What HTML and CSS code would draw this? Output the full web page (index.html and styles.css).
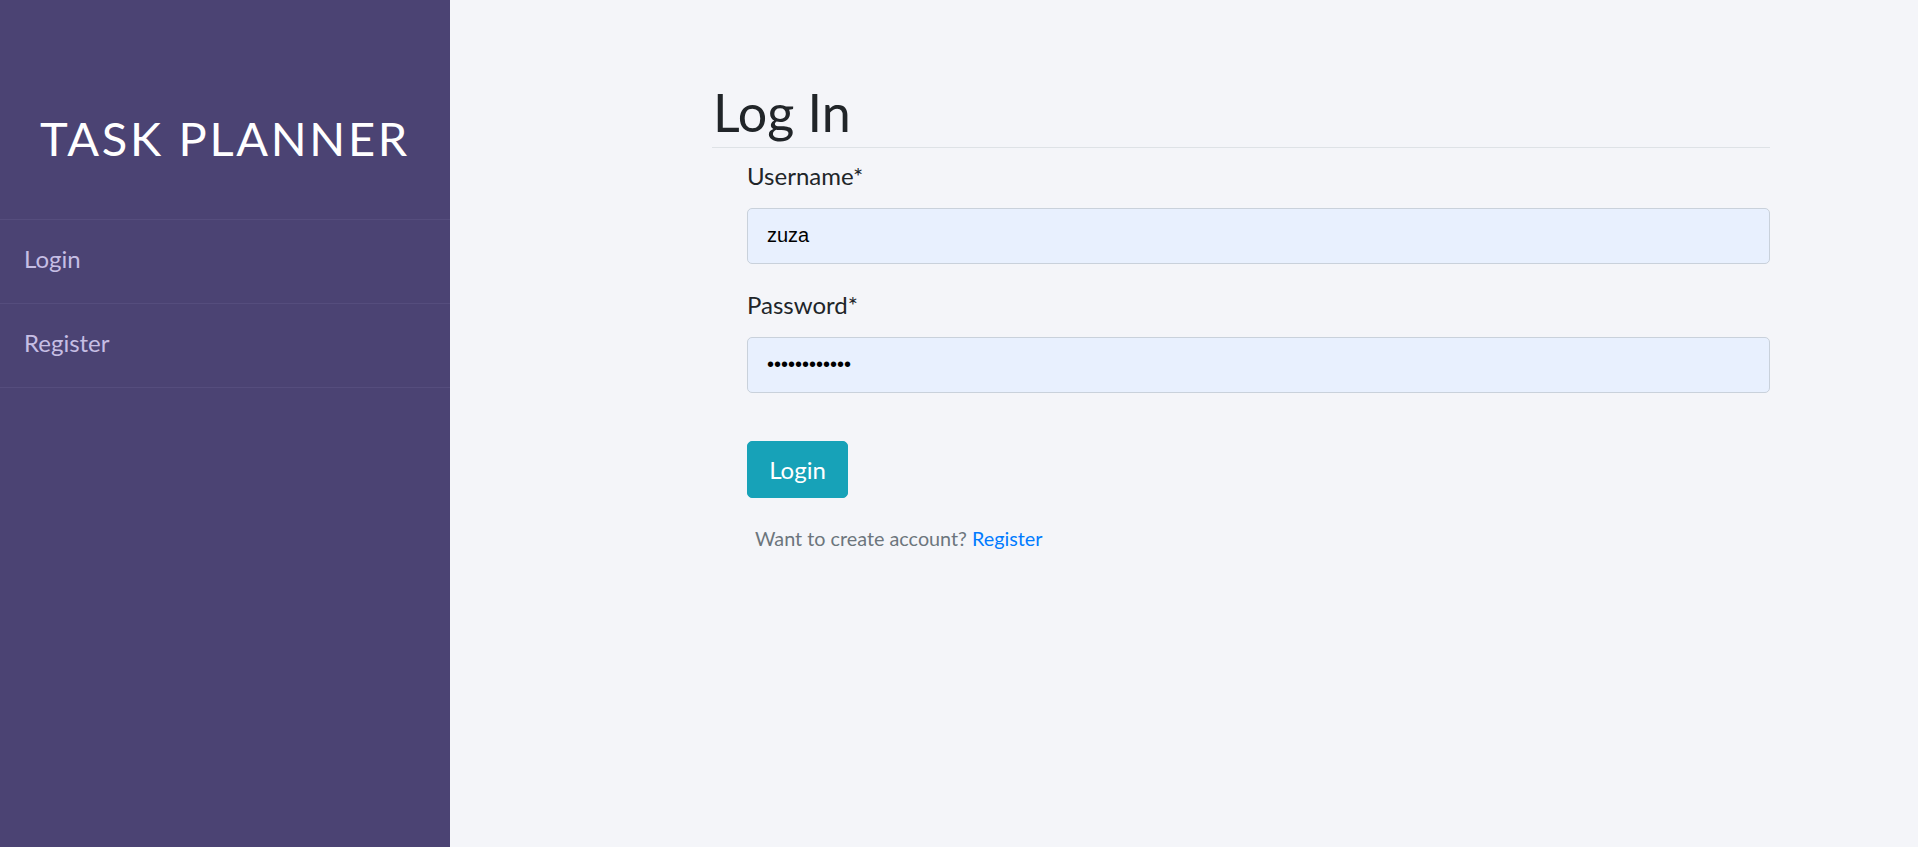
FILE: index.html
```html
<!DOCTYPE html>
<html lang="en">
<head>
<meta charset="utf-8">
<title>Task Planner - Log In</title>
<link rel="stylesheet" href="styles.css">
</head>
<body>
<div class="layout">
  <aside class="sidebar">
    <div class="brand">TASK PLANNER</div>
    <nav class="nav">
      <a class="nav-item" href="#">Login</a>
      <a class="nav-item" href="#">Register</a>
    </nav>
  </aside>
  <main class="main">
    <div class="content">
      <h1 class="title">Log In</h1>
      <form class="form">
        <label class="label" for="username">Username*</label>
        <input class="input" id="username" type="text" value="zuza">
        <label class="label label-pw" for="password">Password*</label>
        <input class="input" id="password" type="password" value="zuzapassword">
        <button class="btn" type="button">Login</button>
        <p class="hint">Want to create account? <a class="link" href="#">Register</a></p>
      </form>
    </div>
  </main>
</div>
</body>
</html>
```

FILE: styles.css
```css
* { box-sizing: border-box; }
html, body { margin: 0; padding: 0; height: 100%; }
body {
  font-family: Lato, "Open Sans", sans-serif;
  background: #f4f5f9;
  color: #212529;
}
.layout {
  display: flex;
  min-height: 100vh;
}
.sidebar {
  width: 450px;
  flex: 0 0 450px;
  background: #4b4373;
}
.brand {
  height: 220px;
  padding-top: 110px;
  text-align: center;
  color: #ffffff;
  font-size: 47px;
  line-height: 1.2;
  letter-spacing: 2.7px;
  border-bottom: 1px solid #554d7d;
}
.nav { display: flex; flex-direction: column; }
.nav-item {
  display: flex;
  align-items: center;
  height: 84px;
  padding-left: 24px;
  padding-bottom: 7px;
  color: #c6bee4;
  font-size: 24px;
  text-decoration: none;
  border-bottom: 1px solid #554d7d;
}
.main {
  flex: 1;
  padding: 84px 148px 0 262px;
}
.title {
  margin: 0;
  font-weight: 400;
  font-size: 52px;
  line-height: 1.1;
  padding-bottom: 6px;
  padding-left: 1px;
  border-bottom: 1px solid #dee2e6;
}
.form {
  display: flex;
  flex-direction: column;
  align-items: flex-start;
  padding-left: 35px;
}
.label {
  font-size: 24px;
  line-height: 1.2;
  margin-top: 14px;
  margin-bottom: 17px;
}
.label-pw { margin-top: 27px; }
.input {
  width: 100%;
  height: 56px;
  padding: 0 19px;
  font-family: "Liberation Sans", Arial, sans-serif;
  font-size: 20px;
  color: #000;
  background: #e8f0fe;
  border: 1px solid #c9d1db;
  border-radius: 5px;
  outline: none;
}
.btn {
  margin-top: 48px;
  width: 101px;
  height: 57px;
  padding: 0;
  font-family: Lato, "Open Sans", sans-serif;
  font-size: 24px;
  color: #fff;
  background: #17a2b8;
  border: 1px solid #17a2b8;
  border-radius: 5px;
}
.hint {
  margin: 28px 0 0 8px;
  font-size: 19.8px;
  color: #6c757d;
}
.link { color: #007bff; text-decoration: none; }
```
